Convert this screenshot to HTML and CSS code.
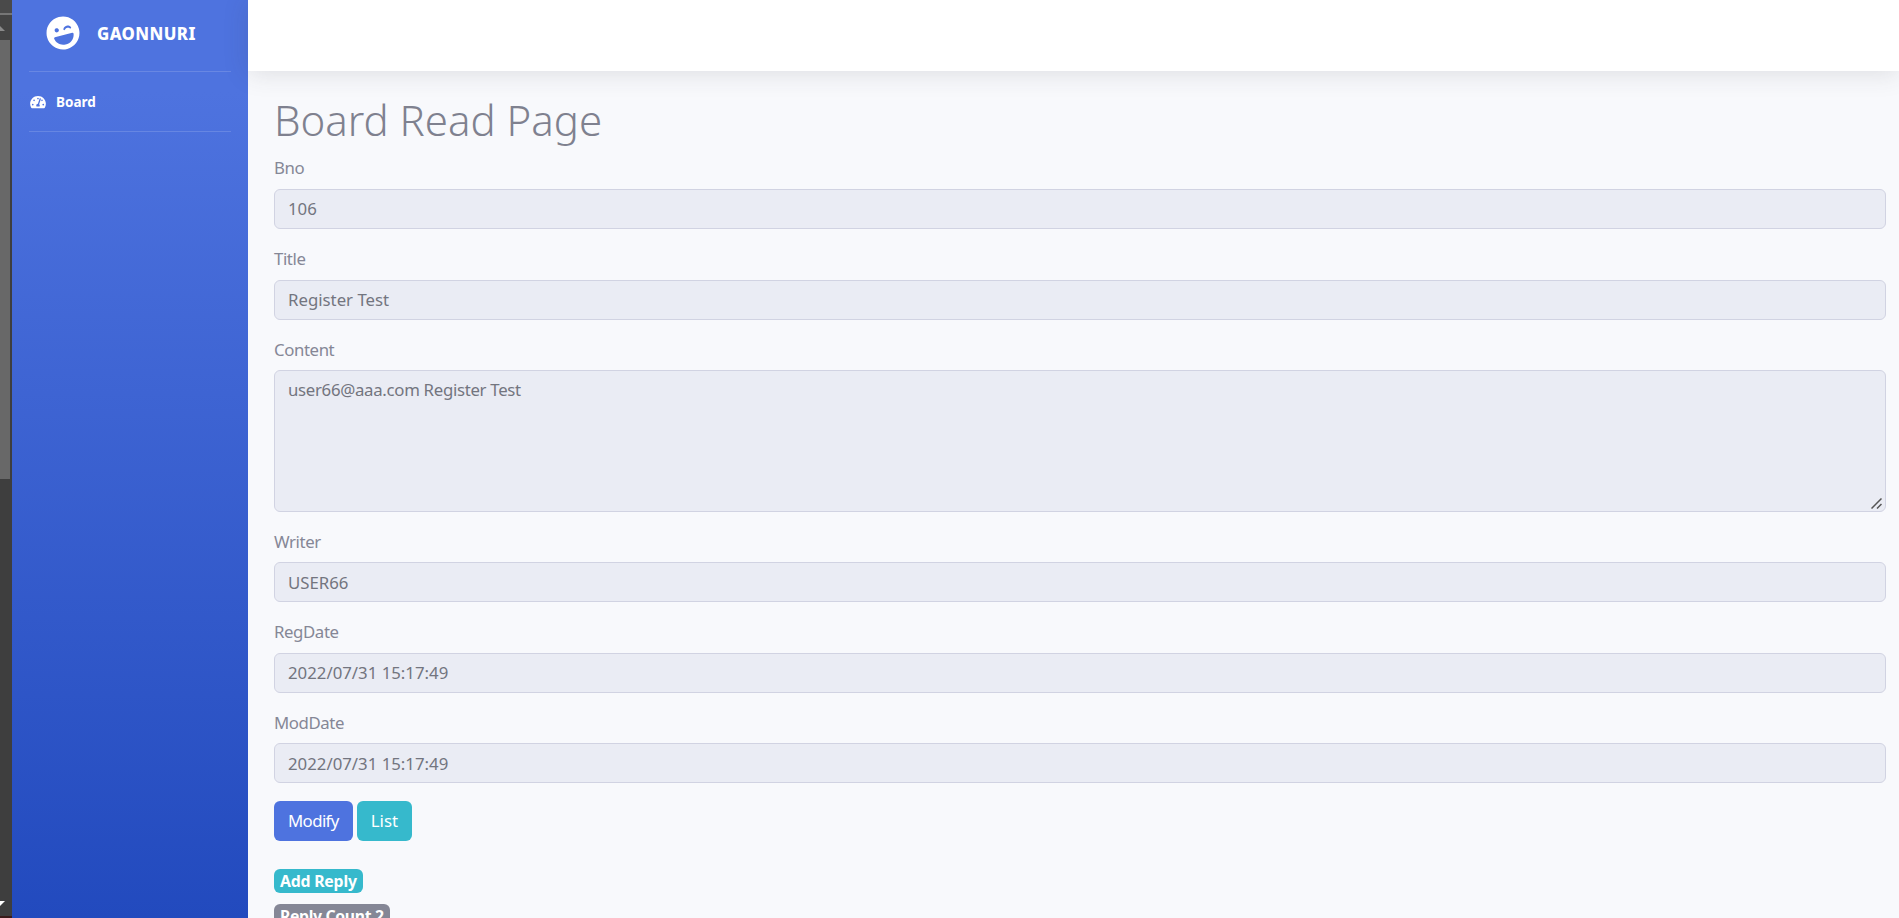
FILE: index.html
```html
<!DOCTYPE html>
<html lang="en">
<head>
    <meta charset="UTF-8">
    <meta name="viewport" content="width=device-width, initial-scale=1.0">
    <title>Board Read Page</title>
    <link rel="stylesheet" href="styles.css">
</head>
<body>
    <div class="desk-strip">
        <div class="strip-top"><span class="strip-arrow"></span></div>
        <div class="strip-thumb"></div>
        <div class="strip-bottom">
            <span class="strip-corner"></span>
            <span class="strip-edge"></span>
        </div>
    </div>
    <div class="wrapper">
        <aside class="sidebar">
            <div class="brand">
                <svg class="brand-icon" viewBox="0 0 496 512"><path fill="#fff" transform="rotate(-15 248 256)" d="M248 8C111 8 0 119 0 256s111 248 248 248 248-111 248-248S385 8 248 8zm20.100 198.100c4-25.200 34.200-42.100 59.900-42.100s55.900 16.900 59.900 42.100c1.700 11.100-11.400 18.300-19.800 10.800l-9.500-8.500c-14.800-13.200-46.200-13.200-61 0L288 217c-8.400 7.400-21.600.3-19.900-10.900zM168 160c17.700 0 32 14.300 32 32s-14.300 32-32 32-32-14.300-32-32 14.300-32 32-32zm230.900 146C390 377 329.400 432 256 432h-16c-73.400 0-134-55-142.900-126-1.200-9.500 6.300-18 15.900-18h270c9.600 0 17.100 8.500 15.900 18z"/></svg>
                <span class="brand-text">GAONNURI</span>
            </div>
            <hr class="divider">
            <a class="nav-link" href="#">
                <svg class="nav-icon" viewBox="0 0 576 512"><path fill="#fff" d="M288 32C128.900 32 0 160.900 0 320c0 52.800 14.300 102.300 39.100 144.800 5.600 9.600 16.300 15.200 27.400 15.200h443c11.100 0 21.800-5.600 27.400-15.200C561.800 422.300 576 372.800 576 320c0-159.100-128.900-288-288-288zm0 64c14.700 0 26.600 10.100 30.300 23.700-1.100 2.300-2.600 4.200-3.500 6.700l-9.200 27.700c-5.100 3.500-11 6-17.600 6-17.700 0-32-14.300-32-32S270.300 96 288 96zM96 384c-17.700 0-32-14.300-32-32s14.300-32 32-32 32 14.300 32 32-14.300 32-32 32zm48-160c-17.700 0-32-14.300-32-32s14.300-32 32-32 32 14.300 32 32-14.300 32-32 32zm246.800-72.400l-61.300 184C343.100 347.300 352 364.500 352 384c0 11.700-3.400 22.600-8.900 32H232.900c-5.500-9.400-8.900-20.300-8.900-32 0-33.900 26.500-61.400 59.900-63.600l61.300-184c4.200-12.600 17.700-19.500 30.400-15.200 12.500 4.200 19.300 17.800 15.200 30.400zm14.700 57.200l15.500-46.600c3.500-1.300 7.100-2.200 11-2.200 17.700 0 32 14.300 32 32s-14.300 32-32 32c-11.400 0-20.900-6.300-26.500-15.200zM480 384c-17.700 0-32-14.300-32-32s14.300-32 32-32 32 14.300 32 32-14.300 32-32 32z"/></svg>
                <span>Board</span>
            </a>
            <hr class="divider">
        </aside>
        <div class="main">
            <div class="topbar"></div>
            <div class="content">
                <h1 class="page-title">Board Read Page</h1>
                <div class="form-group">
                    <label>Bno</label>
                    <input class="form-control" type="text" value="106" readonly>
                </div>
                <div class="form-group">
                    <label>Title</label>
                    <input class="form-control" type="text" value="Register Test" readonly>
                </div>
                <div class="form-group">
                    <label>Content</label>
                    <div class="area-wrap">
                        <textarea class="form-control area" readonly>user66@aaa.com Register Test</textarea>
                        <svg class="grip" viewBox="0 0 11 11"><path d="M0.500 10.500L10.500 0.500M6 10.500L10.500 6" fill="none" stroke="#555" stroke-width="1.500"/></svg>
                    </div>
                </div>
                <div class="form-group">
                    <label>Writer</label>
                    <input class="form-control" type="text" value="USER66" readonly>
                </div>
                <div class="form-group">
                    <label>RegDate</label>
                    <input class="form-control" type="text" value="2022/07/31 15:17:49" readonly>
                </div>
                <div class="form-group">
                    <label>ModDate</label>
                    <input class="form-control" type="text" value="2022/07/31 15:17:49" readonly>
                </div>
                <div class="buttons">
                    <button class="btn btn-primary">Modify</button>
                    <button class="btn btn-info">List</button>
                </div>
                <div class="badge-row">
                    <span class="badge badge-info">Add Reply</span>
                </div>
                <div class="badge-row">
                    <span class="badge badge-secondary">Reply Count 2</span>
                </div>
            </div>
        </div>
    </div>
</body>
</html>
```
FILE: styles.css
```css
html, body {
    height: 100%;
    margin: 0;
    overflow: hidden;
}

body {
    display: flex;
    font-family: "Noto Sans", "Open Sans", sans-serif;
    font-size: 16.8px;
    color: #858796;
    background-color: #f8f9fc;
}

/* window behind the browser */
.desk-strip {
    width: 12px;
    flex-shrink: 0;
    display: flex;
    flex-direction: column;
    overflow: hidden;
    background: #3e3e3e;
}

.strip-top {
    height: 40px;
    box-sizing: border-box;
    padding-top: 11px;
    background: linear-gradient(180deg, #4a4a4a 13px, #767676 13px, #767676 15px, #444 15px);
    flex-shrink: 0;
}

.strip-arrow {
    display: block;
    width: 0;
    height: 0;
    margin: 15px 0 0 -5px;
    border-left: 5px solid transparent;
    border-right: 5px solid transparent;
    border-bottom: 5px solid #8a8a8a;
}

.strip-thumb {
    width: 10px;
    height: 439px;
    background: #686868;
}

.strip-bottom {
    margin-top: auto;
    display: flex;
    flex-direction: column;
}

.strip-corner {
    width: 5px;
    height: 5px;
    margin-bottom: 10px;
    background: #fff;
    clip-path: polygon(0 0, 100% 0, 0 100%);
}

.strip-edge {
    height: 2px;
    background: #3a1a1a;
}

.wrapper {
    flex: 1;
    display: flex;
    min-width: 0;
}

.sidebar {
    width: 236px;
    flex-shrink: 0;
    background-color: #4e73df;
    background-image: linear-gradient(180deg, #4e73df 10%, #224abe 100%);
    display: flex;
    flex-direction: column;
}

.brand {
    height: 66px;
    margin-bottom: 5px;
    display: flex;
    align-items: center;
    padding-left: 34px;
    gap: 17px;
}

.brand-icon {
    width: 34px;
    height: 34px;
}

.brand-text {
    color: #fff;
    font-weight: 800;
    font-size: 16.8px;
    letter-spacing: 0.4px;
}

.divider {
    margin: 0 17px;
    border: 0;
    border-top: 1px solid rgba(255,255,255,0.15);
}

.nav-link {
    height: 59px;
    display: flex;
    align-items: center;
    gap: 10px;
    padding-left: 18px;
    color: #fff;
    font-size: 13.5px;
    font-weight: 700;
    text-decoration: none;
}

.nav-icon {
    width: 16px;
    height: 14px;
}

.main {
    flex: 1;
    min-width: 0;
}

.topbar {
    height: 71px;
    background: #fff;
    box-shadow: 0 2px 26px rgba(58,59,69,0.15);
}

.content {
    padding: 25.600px 13px 0 26px;
}

.page-title {
    margin: 0 0 12.800px;
    font-size: 42px;
    font-weight: 300;
    color: #7f818f;
    line-height: 46px;
}

.form-group {
    margin-bottom: 17px;
}

label {
    display: block;
    margin-bottom: 8.400px;
    line-height: 25.200px;
    letter-spacing: -0.4px;
}

.form-control {
    display: block;
    width: 100%;
    height: 40px;
    box-sizing: border-box;
    padding: 6px 13px;
    border: 1px solid #d1d3e2;
    border-radius: 6px;
    background-color: #eaecf4;
    color: #73757f;
    font-family: inherit;
    font-size: 16.8px;
    line-height: 25px;
}

.form-control:focus {
    outline: none;
}

.area-wrap {
    position: relative;
}

.area {
    height: 141.500px;
    resize: none;
    letter-spacing: -0.3px;
}

.grip {
    position: absolute;
    right: 4px;
    bottom: 3px;
    width: 11px;
    height: 11px;
}

.buttons {
    display: flex;
    gap: 4px;
    margin-top: 17.500px;
    margin-bottom: 28px;
}

.btn {
    height: 40px;
    padding: 0 13px;
    border: 0;
    border-radius: 6px;
    color: #fff;
    font-family: inherit;
    font-size: 16.8px;
}

.btn-primary {
    background-color: #4e73df;
    padding: 0 14px;
    letter-spacing: -0.6px;
}

.btn-info {
    background-color: #36b9cc;
    padding: 0 14px;
}

.badge-row {
    margin-bottom: 11px;
    height: 24px;
}

.badge {
    display: inline-block;
    padding: 3px 6px;
    border-radius: 6px;
    color: #fff;
    font-size: 15.800px;
    font-weight: 700;
    letter-spacing: -0.2px;
    line-height: 18px;
}

.badge-info {
    background-color: #36b9cc;
}

.badge-secondary {
    background-color: #858796;
    letter-spacing: -0.35px;
}
```
